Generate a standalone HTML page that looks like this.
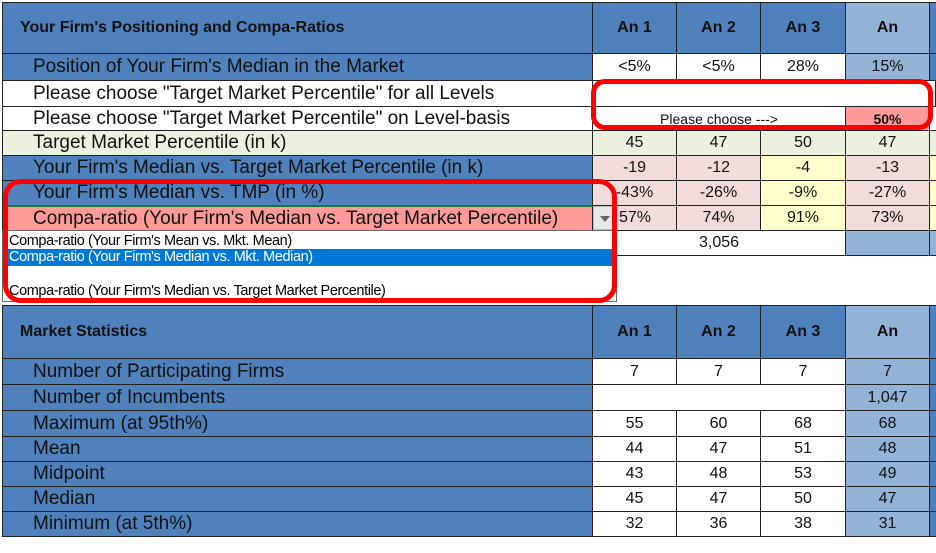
<!DOCTYPE html>
<html><head><meta charset="utf-8"><style>
body{margin:0;width:936px;height:553px;background:#fff;position:relative;overflow:hidden;font-family:"Liberation Sans",sans-serif;}
.c{position:absolute;box-sizing:border-box;border:1px solid #222;display:flex;align-items:center;justify-content:center;font-size:16px;color:#111;white-space:nowrap;overflow:hidden}
.l{justify-content:flex-start;padding-left:30px;font-size:19px;}
.b{background:#4f81bd}.lb{background:#95b3d7}.w{background:#fff}.cr{background:#ebf1de}.pk{background:#f2dcdb}.ye{background:#ffffcc}.sa{background:#ff9a9a}
.h{font-weight:bold;font-size:16px}
.dd{position:absolute;left:2px;top:230px;width:615px;height:72px;background:#fff;border:1px solid #666;box-sizing:border-box;font-size:14.5px;letter-spacing:-0.4px}
.dd div{position:absolute;left:0;width:100%;height:17px;line-height:17px;padding-left:6px;box-sizing:border-box}
.rr{position:absolute;border:5px solid #f00;border-radius:18px;box-sizing:border-box}
</style></head><body>
<div class="c b h" style="left:2px;top:2px;width:591px;height:52px;justify-content:flex-start;padding-left:17px">Your Firm's Positioning and Compa-Ratios</div>
<div class="c b h" style="left:592px;top:2px;width:85px;height:52px">An 1</div>
<div class="c b h" style="left:676px;top:2px;width:85px;height:52px">An 2</div>
<div class="c b h" style="left:760px;top:2px;width:86px;height:52px">An 3</div>
<div class="c lb h" style="left:845px;top:2px;width:85px;height:52px">An</div>
<div class="c b" style="left:929px;top:2px;width:10px;height:52px"></div>

<div class="c b l" style="left:2px;top:53px;width:591px;height:28px">Position of Your Firm's Median in the Market</div>
<div class="c w" style="left:592px;top:53px;width:85px;height:28px">&lt;5%</div>
<div class="c w" style="left:676px;top:53px;width:85px;height:28px">&lt;5%</div>
<div class="c w" style="left:760px;top:53px;width:86px;height:28px">28%</div>
<div class="c lb" style="left:845px;top:53px;width:85px;height:28px">15%</div>
<div class="c b" style="left:929px;top:53px;width:10px;height:28px"></div>

<div class="c w l" style="left:2px;top:80px;width:591px;height:27px">Please choose "Target Market Percentile" for all Levels</div>
<div class="c w" style="left:592px;top:80px;width:344px;height:27px"></div>

<div class="c w l" style="left:2px;top:106px;width:591px;height:25px">Please choose "Target Market Percentile" on Level-basis</div>
<div class="c w" style="left:592px;top:106px;width:254px;height:25px;font-size:14px;padding-top:1px">Please choose ---&gt;</div>
<div class="c sa h" style="left:845px;top:106px;width:85px;height:25px;font-size:14px">50%</div>

<div class="c cr l" style="left:2px;top:130px;width:591px;height:26px">Target Market Percentile (in k)</div>
<div class="c cr" style="left:592px;top:130px;width:85px;height:26px">45</div>
<div class="c cr" style="left:676px;top:130px;width:85px;height:26px">47</div>
<div class="c cr" style="left:760px;top:130px;width:86px;height:26px">50</div>
<div class="c cr" style="left:845px;top:130px;width:85px;height:26px">47</div>
<div class="c cr" style="left:929px;top:130px;width:10px;height:26px"></div>

<div class="c b l" style="left:2px;top:155px;width:591px;height:26px">Your Firm's Median vs. Target Market Percentile (in k)</div>
<div class="c pk" style="left:592px;top:155px;width:85px;height:26px">-19</div>
<div class="c pk" style="left:676px;top:155px;width:85px;height:26px">-12</div>
<div class="c ye" style="left:760px;top:155px;width:86px;height:26px">-4</div>
<div class="c pk" style="left:845px;top:155px;width:85px;height:26px">-13</div>
<div class="c ye" style="left:929px;top:155px;width:10px;height:26px"></div>

<div class="c b l" style="left:2px;top:180px;width:591px;height:26px">Your Firm's Median vs. TMP (in %)</div>
<div class="c pk" style="left:592px;top:180px;width:85px;height:26px">-43%</div>
<div class="c pk" style="left:676px;top:180px;width:85px;height:26px">-26%</div>
<div class="c ye" style="left:760px;top:180px;width:86px;height:26px">-9%</div>
<div class="c pk" style="left:845px;top:180px;width:85px;height:26px">-27%</div>
<div class="c ye" style="left:929px;top:180px;width:10px;height:26px"></div>

<div class="c sa l" style="left:2px;top:205px;width:591px;height:26px;border-top:2px solid #1a7a3a">Compa-ratio (Your Firm's Median vs. Target Market Percentile)</div>
<div style="position:absolute;left:593px;top:206px;width:24px;height:24px;background:#e8e8e8;border:1px solid #bbb;box-sizing:border-box"><div style="position:absolute;left:6px;top:9px;width:0;height:0;border-left:5px solid transparent;border-right:5px solid transparent;border-top:6px solid #666"></div></div>
<div class="c pk" style="left:617px;top:205px;width:60px;height:26px;border-left:none;justify-content:flex-start;padding-left:2px">57%</div>
<div class="c pk" style="left:676px;top:205px;width:85px;height:26px">74%</div>
<div class="c ye" style="left:760px;top:205px;width:86px;height:26px">91%</div>
<div class="c pk" style="left:845px;top:205px;width:85px;height:26px">73%</div>
<div class="c ye" style="left:929px;top:205px;width:10px;height:26px"></div>

<div class="c w" style="left:592px;top:230px;width:254px;height:26px">3,056</div>
<div class="c lb" style="left:845px;top:230px;width:85px;height:26px"></div>
<div class="c lb" style="left:929px;top:230px;width:10px;height:26px"></div>

<div class="dd">
<div style="top:2px">Compa-ratio (Your Firm's Mean vs. Mkt. Mean)</div>
<div style="top:18px;background:#0078d7;color:#fff">Compa-ratio (Your Firm's Median vs. Mkt. Median)</div>
<div style="top:52px">Compa-ratio (Your Firm's Median vs. Target Market Percentile)</div>
</div>

<div class="c b h" style="left:2px;top:305px;width:591px;height:54px;justify-content:flex-start;padding-left:17px">Market Statistics</div>
<div class="c b h" style="left:592px;top:305px;width:85px;height:54px">An 1</div>
<div class="c b h" style="left:676px;top:305px;width:85px;height:54px">An 2</div>
<div class="c b h" style="left:760px;top:305px;width:86px;height:54px">An 3</div>
<div class="c lb h" style="left:845px;top:305px;width:85px;height:54px">An</div>
<div class="c b" style="left:929px;top:305px;width:10px;height:54px"></div>

<div class="c b l" style="left:2px;top:358px;width:591px;height:27px">Number of Participating Firms</div>
<div class="c w" style="left:592px;top:358px;width:85px;height:27px">7</div>
<div class="c w" style="left:676px;top:358px;width:85px;height:27px">7</div>
<div class="c w" style="left:760px;top:358px;width:86px;height:27px">7</div>
<div class="c lb" style="left:845px;top:358px;width:85px;height:27px">7</div>
<div class="c b" style="left:929px;top:358px;width:10px;height:27px"></div>

<div class="c b l" style="left:2px;top:384px;width:591px;height:27px">Number of Incumbents</div>
<div class="c w" style="left:592px;top:384px;width:254px;height:27px"></div>
<div class="c lb" style="left:845px;top:384px;width:85px;height:27px">1,047</div>
<div class="c b" style="left:929px;top:384px;width:10px;height:27px"></div>

<div class="c b l" style="left:2px;top:410px;width:591px;height:27px">Maximum (at 95th%)</div>
<div class="c w" style="left:592px;top:410px;width:85px;height:27px">55</div>
<div class="c w" style="left:676px;top:410px;width:85px;height:27px">60</div>
<div class="c w" style="left:760px;top:410px;width:86px;height:27px">68</div>
<div class="c lb" style="left:845px;top:410px;width:85px;height:27px">68</div>
<div class="c b" style="left:929px;top:410px;width:10px;height:27px"></div>

<div class="c b l" style="left:2px;top:436px;width:591px;height:26px">Mean</div>
<div class="c w" style="left:592px;top:436px;width:85px;height:26px">44</div>
<div class="c w" style="left:676px;top:436px;width:85px;height:26px">47</div>
<div class="c w" style="left:760px;top:436px;width:86px;height:26px">51</div>
<div class="c lb" style="left:845px;top:436px;width:85px;height:26px">48</div>
<div class="c b" style="left:929px;top:436px;width:10px;height:26px"></div>

<div class="c b l" style="left:2px;top:461px;width:591px;height:26px">Midpoint</div>
<div class="c w" style="left:592px;top:461px;width:85px;height:26px">43</div>
<div class="c w" style="left:676px;top:461px;width:85px;height:26px">48</div>
<div class="c w" style="left:760px;top:461px;width:86px;height:26px">53</div>
<div class="c lb" style="left:845px;top:461px;width:85px;height:26px">49</div>
<div class="c b" style="left:929px;top:461px;width:10px;height:26px"></div>

<div class="c b l" style="left:2px;top:486px;width:591px;height:26px">Median</div>
<div class="c w" style="left:592px;top:486px;width:85px;height:26px">45</div>
<div class="c w" style="left:676px;top:486px;width:85px;height:26px">47</div>
<div class="c w" style="left:760px;top:486px;width:86px;height:26px">50</div>
<div class="c lb" style="left:845px;top:486px;width:85px;height:26px">47</div>
<div class="c b" style="left:929px;top:486px;width:10px;height:26px"></div>

<div class="c b l" style="left:2px;top:511px;width:591px;height:26px">Minimum (at 5th%)</div>
<div class="c w" style="left:592px;top:511px;width:85px;height:26px">32</div>
<div class="c w" style="left:676px;top:511px;width:85px;height:26px">36</div>
<div class="c w" style="left:760px;top:511px;width:86px;height:26px">38</div>
<div class="c lb" style="left:845px;top:511px;width:85px;height:26px">31</div>
<div class="c b" style="left:929px;top:511px;width:10px;height:26px"></div>

<div class="rr" style="left:3px;top:179px;width:614px;height:124px"></div>
<div class="rr" style="left:591px;top:79px;width:342px;height:51px;border-radius:14px"></div>
</body></html>
